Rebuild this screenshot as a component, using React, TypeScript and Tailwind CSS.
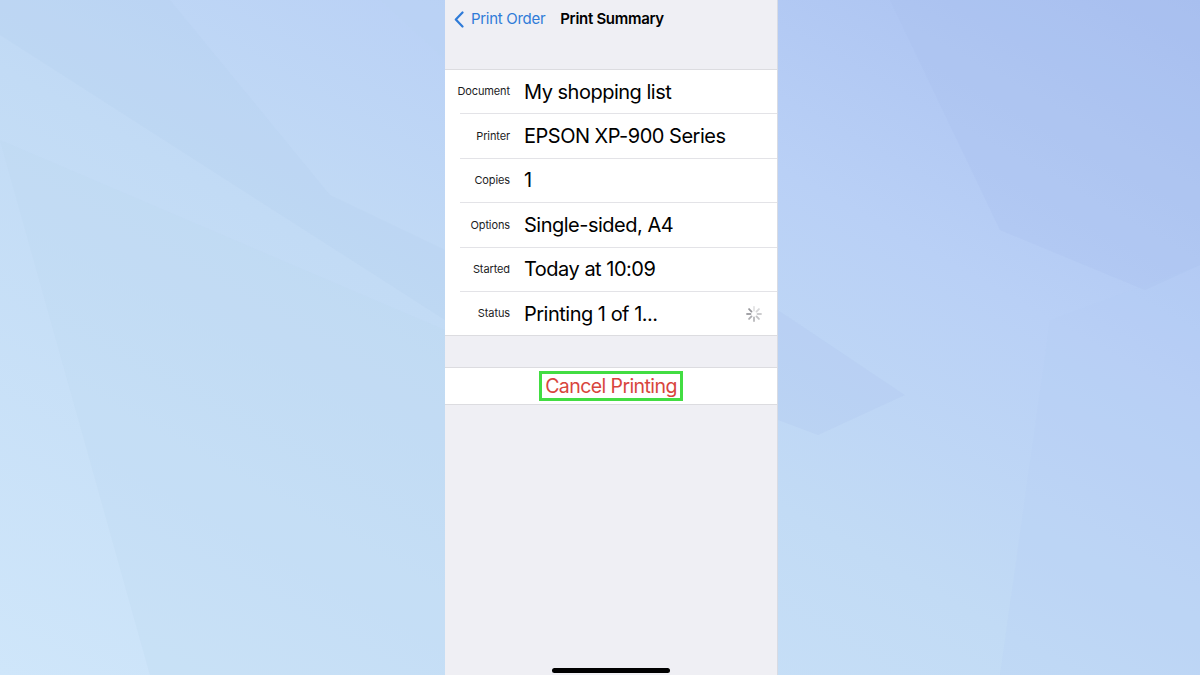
const rows = [
  { label: "Document", value: "My shopping list" },
  { label: "Printer", value: "EPSON XP-900 Series" },
  { label: "Copies", value: "1" },
  { label: "Options", value: "Single-sided, A4" },
  { label: "Started", value: "Today at 10:09" },
  { label: "Status", value: "Printing 1 of 1...", busy: true },
];

function Backdrop() {
  // soft faceted wallpaper behind the phone
  return (
    <svg className="absolute inset-0 h-full w-full" viewBox="0 0 1200 675" preserveAspectRatio="none">
      <defs>
        <linearGradient id="bg" x1="0" y1="1" x2="1" y2="0">
          <stop offset="0" stopColor="#cfe6fa" />
          <stop offset="0.45" stopColor="#c2dbf5" />
          <stop offset="0.7" stopColor="#b9d0f6" />
          <stop offset="1" stopColor="#a8bff0" />
        </linearGradient>
      </defs>
      <rect width="1200" height="675" fill="url(#bg)" />
      <polygon points="0,0 170,0 330,195 445,250 445,320 0,35" fill="#b5d0ee" opacity="0.3" />
      <polygon points="0,140 445,330 445,675 150,675" fill="#bcd7f1" opacity="0.25" />
      <polygon points="380,0 445,0 445,60" fill="#b9d4f2" opacity="0.3" />
      <polygon points="890,0 1200,0 1200,265 1145,290 1000,230" fill="#a9bff0" opacity="0.3" />
      <polygon points="778,310 905,395 818,435 778,420" fill="#afc7f0" opacity="0.3" />
      <polygon points="1050,320 1200,265 1200,675 1000,675" fill="#b4cbf4" opacity="0.2" />
    </svg>
  );
}

function Spinner() {
  const spokes = Array.from({ length: 8 }, (_, i) => i);
  return (
    <svg width="18" height="18" viewBox="0 0 18 18" className="shrink-0">
      {spokes.map((i) => (
        <line
          key={i}
          x1="9"
          y1="2"
          x2="9"
          y2="5.5"
          stroke="#8e8e93"
          strokeWidth="1.8"
          strokeLinecap="round"
          opacity={0.25 + (i / 8) * 0.75}
          transform={`rotate(${i * 45} 9 9)`}
        />
      ))}
    </svg>
  );
}

export default function App() {
  return (
    <div className="relative flex h-[675px] w-[1200px] overflow-hidden font-['Inter','Liberation_Sans',sans-serif]">
      <Backdrop />

      <div className="relative ml-[445px] flex h-full w-[333px] flex-col border-r border-[#d8dbe3] bg-[#efeff4]">
        <div className="flex h-[38px] items-center pl-[9px]">
          <svg width="10" height="17" viewBox="0 0 10 17" className="shrink-0">
            <path d="M8.5 1.5 L1.8 8.5 L8.5 15.5" fill="none" stroke="#2f7bd8" strokeWidth="2.2" strokeLinecap="round" strokeLinejoin="round" />
          </svg>
          <span className="ml-[7px] text-[15px] tracking-[-0.02em] text-[#2f7bd8]">Print Order</span>
          <span className="ml-[15px] text-[15px] font-semibold tracking-[-0.02em] text-black">Print Summary</span>
        </div>

        <div className="mt-[31px] border-y border-[#dcdce0] bg-white">
          {rows.map((row, i) => (
            <div key={row.label}>
              {i > 0 && <div className="ml-[15px] h-px bg-[#e3e3e7]" />}
              <div className="flex h-[43.4px] items-center pr-[14px]">
                <span className="w-[65px] shrink-0 text-right text-[11px] tracking-[-0.01em] text-[#1c1c1e]">{row.label}</span>
                <span className="ml-[14px] flex-1 text-[20px] tracking-[-0.025em] text-black">{row.value}</span>
                {row.busy && <Spinner />}
              </div>
            </div>
          ))}
        </div>

        <div className="mt-[31px] flex h-[38px] items-center justify-center border-y border-[#dcdce0] bg-white">
          <span className="border-[3px] border-[#42dd42] px-[3px] py-[1px] text-[19.5px] leading-[22px] tracking-[-0.03em] text-[#d8453d]">
            Cancel Printing
          </span>
        </div>

        <div className="mt-auto mb-[2px] flex justify-center">
          <div className="h-[5px] w-[118px] rounded-full bg-black" />
        </div>
      </div>
    </div>
  );
}
